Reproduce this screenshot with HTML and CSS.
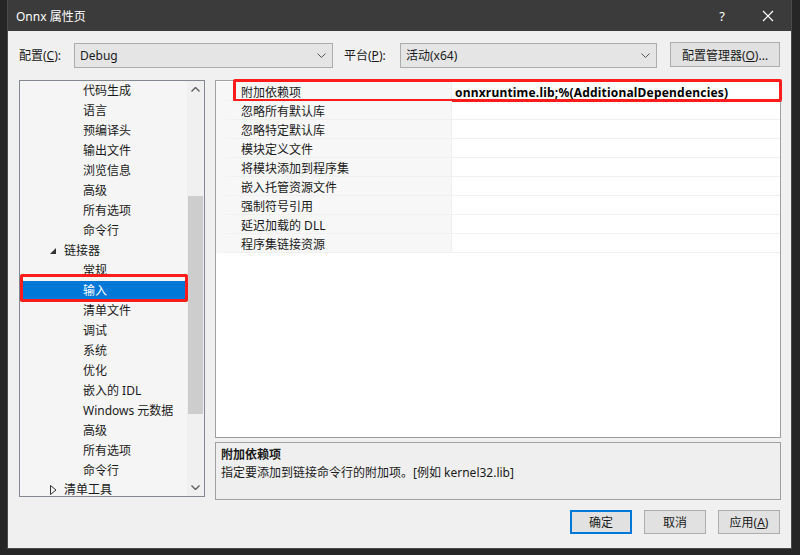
FILE: index.html
```html
<!DOCTYPE html>
<html lang="zh-CN">

<head>
    <meta charset="UTF-8">
    <title>Onnx 属性页</title>
    <link rel="stylesheet" href="styles.css">
</head>

<body>
    <div class="window">
        <div class="title-bar">
            <span class="title">Onnx 属性页</span>
            <span class="help">?</span>
            <span class="close">
                <svg width="12" height="12" viewBox="0 0 12 12">
                    <path d="M1 1 L11 11 M11 1 L1 11" stroke="#fff" stroke-width="1.2" fill="none" />
                </svg>
            </span>
        </div>

        <div class="dialog">
            <div class="config-row">
                <span class="label label-config">配置(<u>C</u>):</span>
                <div class="select select-config">
                    <span>Debug</span>
                    <svg class="chevron" width="9" height="5" viewBox="0 0 9 5">
                        <path d="M0.5 0.5 L4.5 4.5 L8.5 0.5" stroke="#555" fill="none" />
                    </svg>
                </div>
                <span class="label label-platform">平台(<u>P</u>):</span>
                <div class="select select-platform">
                    <span>活动(x64)</span>
                    <svg class="chevron" width="9" height="5" viewBox="0 0 9 5">
                        <path d="M0.5 0.5 L4.5 4.5 L8.5 0.5" stroke="#555" fill="none" />
                    </svg>
                </div>
                <button class="btn btn-manager">配置管理器(<u>O</u>)...</button>
            </div>

            <div class="main">
                <div class="tree">
                    <ul class="tree-list">
                        <li class="lvl2">代码生成</li>
                        <li class="lvl2">语言</li>
                        <li class="lvl2">预编译头</li>
                        <li class="lvl2">输出文件</li>
                        <li class="lvl2">浏览信息</li>
                        <li class="lvl2">高级</li>
                        <li class="lvl2">所有选项</li>
                        <li class="lvl2">命令行</li>
                        <li class="lvl1">
                            <svg class="arrow" width="7" height="7" viewBox="0 0 7 7">
                                <path d="M6 0 L6 6 L0 6 Z" fill="#333" />
                            </svg>链接器
                        </li>
                        <li class="lvl2">常规</li>
                        <li class="lvl2 selected">输入<span class="mark"></span></li>
                        <li class="lvl2">清单文件</li>
                        <li class="lvl2">调试</li>
                        <li class="lvl2">系统</li>
                        <li class="lvl2">优化</li>
                        <li class="lvl2">嵌入的 IDL</li>
                        <li class="lvl2">Windows 元数据</li>
                        <li class="lvl2">高级</li>
                        <li class="lvl2">所有选项</li>
                        <li class="lvl2">命令行</li>
                        <li class="lvl1 last">
                            <svg class="arrow" width="7" height="10" viewBox="0 0 7 10">
                                <path d="M0.5 0.5 L6 5 L0.5 9.5 Z" fill="none" stroke="#333" />
                            </svg>清单工具
                        </li>
                    </ul>
                    <div class="scrollbar">
                        <svg class="scroll-arrow" width="9" height="5" viewBox="0 0 9 5">
                            <path d="M0.5 4.5 L4.5 0.5 L8.5 4.5" stroke="#606060" stroke-width="1.4" fill="none" />
                        </svg>
                        <div class="scroll-track">
                            <div class="scroll-thumb"></div>
                        </div>
                        <svg class="scroll-arrow" width="9" height="5" viewBox="0 0 9 5">
                            <path d="M0.5 0.5 L4.5 4.5 L8.5 0.5" stroke="#606060" stroke-width="1.4" fill="none" />
                        </svg>
                    </div>
                </div>

                <div class="right">
                    <div class="grid">
                        <div class="row">
                            <div class="name">附加依赖项</div>
                            <div class="value">onnxruntime.lib;%(AdditionalDependencies)</div>
                            <span class="mark"></span>
                        </div>
                        <div class="row">
                            <div class="name">忽略所有默认库</div>
                            <div class="value"></div>
                        </div>
                        <div class="row">
                            <div class="name">忽略特定默认库</div>
                            <div class="value"></div>
                        </div>
                        <div class="row">
                            <div class="name">模块定义文件</div>
                            <div class="value"></div>
                        </div>
                        <div class="row">
                            <div class="name">将模块添加到程序集</div>
                            <div class="value"></div>
                        </div>
                        <div class="row">
                            <div class="name">嵌入托管资源文件</div>
                            <div class="value"></div>
                        </div>
                        <div class="row">
                            <div class="name">强制符号引用</div>
                            <div class="value"></div>
                        </div>
                        <div class="row">
                            <div class="name">延迟加载的 DLL</div>
                            <div class="value"></div>
                        </div>
                        <div class="row">
                            <div class="name">程序集链接资源</div>
                            <div class="value"></div>
                        </div>
                    </div>
                    <div class="desc">
                        <p class="desc-title">附加依赖项</p>
                        <p class="desc-text">指定要添加到链接命令行的附加项。[例如 kernel32.lib]</p>
                    </div>
                </div>
            </div>

            <div class="footer">
                <button class="btn btn-default">确定</button>
                <button class="btn">取消</button>
                <button class="btn">应用(<u>A</u>)</button>
            </div>
        </div>
    </div>
</body>

</html>
```

FILE: styles.css
```css
* {
    margin: 0px;
    padding: 0px;
    box-sizing: border-box;
}

body {
    background-color: #262626;
    font-family: "Noto Sans", "Noto Sans CJK SC", sans-serif;
    font-size: 12px;
    color: #1a1a1a;
}

.window {
    margin-left: 7px;
    width: 785px;
    height: 549px;
    display: flex;
    flex-direction: column;
    border-left: 1px solid #4a4a4a;
    border-right: 1px solid #4a4a4a;
    border-bottom: 1px solid #4a4a4a;
}

/* title bar */
.title-bar {
    height: 31px;
    background-color: #3b3b3b;
    color: #fff;
    display: flex;
    align-items: center;
    padding-left: 8px;
}

.title {
    flex: 1;
    font-size: 12px;
}

.help {
    font-size: 13px;
    width: 46px;
    text-align: center;
}

.close {
    width: 46px;
    display: flex;
    justify-content: center;
}

.dialog {
    flex: 1;
    background-color: #f0f0f0;
    padding: 11px 10px 0px 11px;
}

/* configuration row */
.config-row {
    display: flex;
    align-items: center;
    height: 26px;
}

.label-config {
    width: 55px;
}

.label-platform {
    width: 56px;
    margin-left: 11px;
}

.select {
    height: 25px;
    background-color: #e5e5e5;
    border: 1px solid #adadad;
    display: flex;
    align-items: center;
    justify-content: space-between;
    padding: 0px 6px 0px 5px;
}

.select-config {
    width: 259px;
}

.select-platform {
    width: 257px;
}

.btn {
    font-family: "Noto Sans", "Noto Sans CJK SC", sans-serif;
    font-size: 12px;
    color: #1a1a1a;
    background-color: #e1e1e1;
    border: 1px solid #adadad;
    height: 24px;
    width: 62px;
}

.btn-manager {
    width: 110px;
    height: 25px;
    margin-left: 13px;
    margin-top: -1px;
}

.btn-default {
    border: 2px solid #0078d7;
}

/* content */
.main {
    display: flex;
    gap: 10px;
    margin-top: 12px;
}

.tree {
    position: relative;
    width: 186px;
    height: 417px;
    background-color: #f5f5f5;
    border: 1px solid #828790;
    display: flex;
}

.tree-list {
    list-style: none;
    flex: 1;
}

.tree-list li {
    position: relative;
    height: 20px;
    line-height: 20px;
    white-space: nowrap;
    display: flex;
    align-items: center;
}

/* the bottom row is only partly in view */
.tree-list .last {
    height: 15px;
    line-height: 12px;
    padding-top: 3px;
    align-items: flex-start;
}

.last .arrow {
    margin-top: 1px;
}

.lvl2 {
    padding-left: 63px;
}

.lvl1 {
    padding-left: 30px;
}

.arrow {
    margin-right: 7px;
}

.tree-list .selected {
    background-color: #0078d7;
    color: #fff;
}

.mark {
    position: absolute;
    border: 3px solid #ff1c1c;
    border-radius: 2px;
}

.selected .mark {
    left: 0px;
    right: -1px;
    top: -7px;
    bottom: -1px;
}

.scrollbar {
    width: 17px;
    background-color: #f0f0f0;
    display: flex;
    flex-direction: column;
    align-items: center;
}

.scroll-arrow {
    margin: 6px 0px;
}

.scroll-track {
    flex: 1;
    width: 100%;
    padding-top: 98px;
    padding-bottom: 65px;
    display: flex;
    justify-content: center;
}

.scroll-thumb {
    width: 15px;
    height: 100%;
    background-color: #cdcdcd;
}

/* property grid */
.right {
    width: 566px;
    display: flex;
    flex-direction: column;
    gap: 4px;
}

.grid {
    height: 358px;
    background-color: #fff;
    border: 1px solid #a0a0a0;
    padding-top: 1px;
}

.row {
    position: relative;
    display: flex;
    height: 19px;
    border-bottom: 1px solid #f0f0f0;
    border-left: 21px solid #f7f7f7;
}

.name,
.value {
    height: 18px;
    line-height: 18px;
    padding-top: 2px;
    overflow: hidden;
    white-space: nowrap;
}

.name {
    width: 215px;
    padding-left: 4px;
    background-color: #f7f7f7;
    border-right: 1px solid #f0f0f0;
}

.value {
    flex: 1;
    padding-left: 3px;
    font-weight: bold;
    letter-spacing: 0.2px;
    color: #000;
}

.row .mark {
    left: -4px;
    right: -2px;
    top: -3px;
    bottom: -2px;
}

.desc {
    height: 58px;
    border: 1px solid #a0a0a0;
    background-color: #efefef;
    padding: 3px 5px;
}

.desc-title {
    font-weight: bold;
    line-height: 18px;
}

.desc-text {
    line-height: 18px;
}

/* dialog buttons */
.footer {
    display: flex;
    justify-content: flex-end;
    gap: 12px;
    margin-top: 10px;
    padding-right: 1px;
}
```
